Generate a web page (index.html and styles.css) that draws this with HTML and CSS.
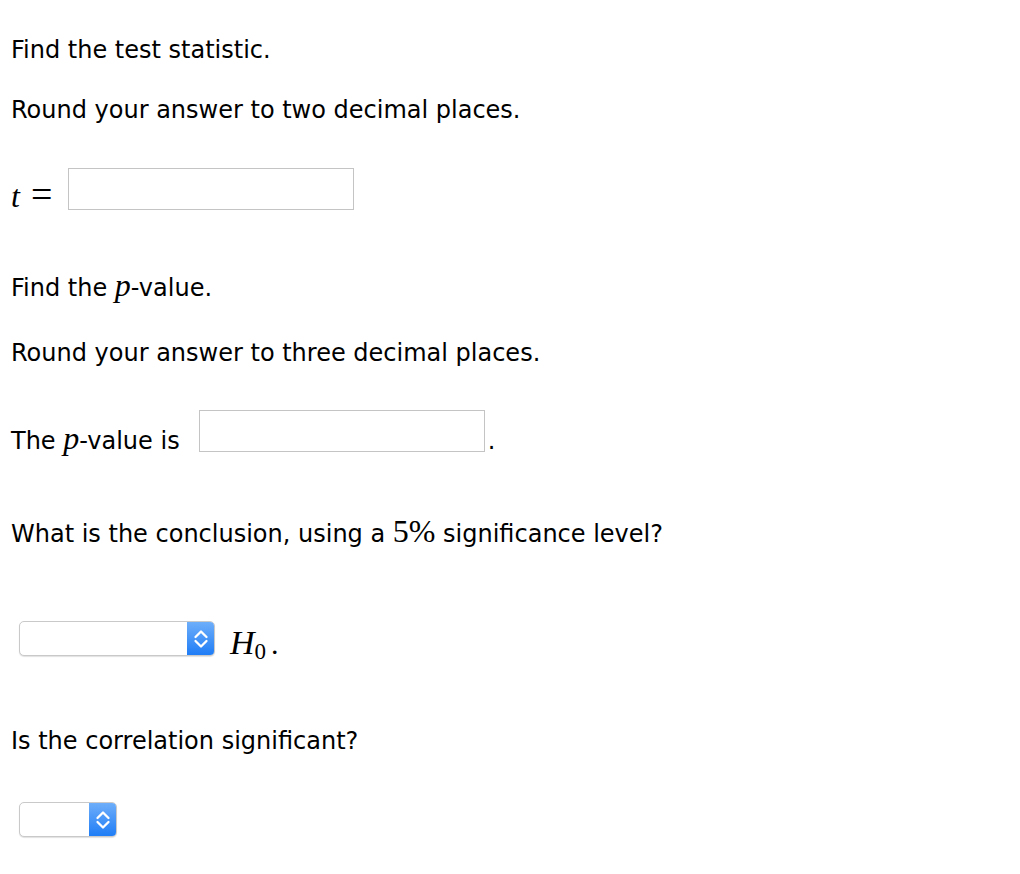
FILE: index.html
```html
<!DOCTYPE html>
<html lang="en">
<head>
    <meta charset="UTF-8">
    <title>Correlation test</title>
    <link rel="stylesheet" href="styles.css">
</head>
<body>
    <div class="question">
        <p class="line first">Find the test statistic.</p>
        <p class="line">Round your answer to two decimal places.</p>

        <div class="answer-row stat-row">
            <span class="label"><span class="math">t</span><span class="math-op">=</span></span>
            <span class="answer-box"></span>
        </div>

        <p class="line pvalue-head">Find the <span class="math">p</span>-value.</p>
        <p class="line round-three">Round your answer to three decimal places.</p>

        <div class="answer-row pvalue-row">
            <span class="label">The <span class="math">p</span>-value is</span>
            <span class="answer-box"></span>
            <span class="label dot">.</span>
        </div>

        <p class="line conclusion-head">What is the conclusion, using a <span class="math-num">5%</span> significance level?</p>

        <div class="answer-row select-row">
            <span class="select-box wide">
                <span class="select-btn">
                    <svg width="16" height="22" viewBox="0 0 16 22"><path d="M2.5 9 L8 3.5 L13.5 9 M2.5 13 L8 18.5 L13.5 13" fill="none" stroke="#fff" stroke-width="2.3" stroke-linecap="round" stroke-linejoin="round"/></svg>
                </span>
            </span>
            <span class="hyp"><span class="math-h">H</span><sub>0</sub><span class="hyp-dot">.</span></span>
        </div>

        <p class="line corr-head">Is the correlation significant?</p>

        <div class="answer-row select-row last">
            <span class="select-box narrow">
                <span class="select-btn">
                    <svg width="16" height="22" viewBox="0 0 16 22"><path d="M2.5 9 L8 3.5 L13.5 9 M2.5 13 L8 18.5 L13.5 13" fill="none" stroke="#fff" stroke-width="2.3" stroke-linecap="round" stroke-linejoin="round"/></svg>
                </span>
            </span>
        </div>
    </div>
</body>
</html>
```

FILE: styles.css
```css
body {
    margin: 0;
    padding: 0;
    background-color: #ffffff;
    color: #000000;
    font-family: "DejaVu Sans", Verdana, sans-serif;
    font-size: 24px;
}
.question {
    padding: 34px 0 20px 11px;
}
.line {
    margin: 0;
    line-height: 32px;
    white-space: nowrap;
}
.line + .line {
    margin-top: 28px;
}
.math, .math-op, .math-num, .math-h {
    font-family: "Liberation Serif", "Times New Roman", serif;
    line-height: 0;
}
.math, .math-h {
    font-style: italic;
    font-size: 32px;
}
.math-op {
    font-size: 38px;
    margin-left: 11px;
}
.math-num {
    font-size: 32px;
}
.answer-row {
    display: flex;
    align-items: flex-end;
}
.label {
    line-height: 32px;
    margin-bottom: -5px;
}
.answer-box {
    display: block;
    width: 284px;
    height: 40px;
    border: 1px solid #c4c4c4;
    background-color: #ffffff;
}
.stat-row {
    margin-top: 42px;
    gap: 16px;
}
.pvalue-head {
    margin-top: 62px;
}
.line.round-three {
    margin-top: 33px;
}
.pvalue-row {
    margin-top: 41px;
    gap: 19px;
}
.dot {
    margin-left: -16px;
}
.conclusion-head {
    margin-top: 66px;
}
.select-row {
    margin-top: 71px;
    padding-left: 8px;
    align-items: flex-start;
}
.select-box {
    display: flex;
    justify-content: flex-end;
    height: 33px;
    border: 1px solid #c9c9c9;
    border-radius: 5px;
    background-color: #ffffff;
    box-shadow: 0 1px 1px rgba(0, 0, 0, 0.12);
    overflow: hidden;
}
.select-box.wide {
    width: 194px;
}
.select-box.narrow {
    width: 96px;
}
.select-btn {
    display: flex;
    align-items: center;
    justify-content: center;
    width: 27px;
    background: linear-gradient(#6eaefa, #1f7df6);
}
.hyp {
    display: block;
    margin: 5px 0 0 15px;
    line-height: 36px;
}
.math-h {
    font-size: 34px;
}
.hyp sub {
    font-family: "Liberation Serif", "Times New Roman", serif;
    font-size: 23px;
    line-height: 0;
    vertical-align: -5px;
}
.hyp-dot {
    font-family: "Liberation Serif", "Times New Roman", serif;
    font-size: 30px;
    margin-left: 5px;
}
.corr-head {
    margin-top: 61px;
}
.select-row.last {
    margin-top: 45px;
}
```
